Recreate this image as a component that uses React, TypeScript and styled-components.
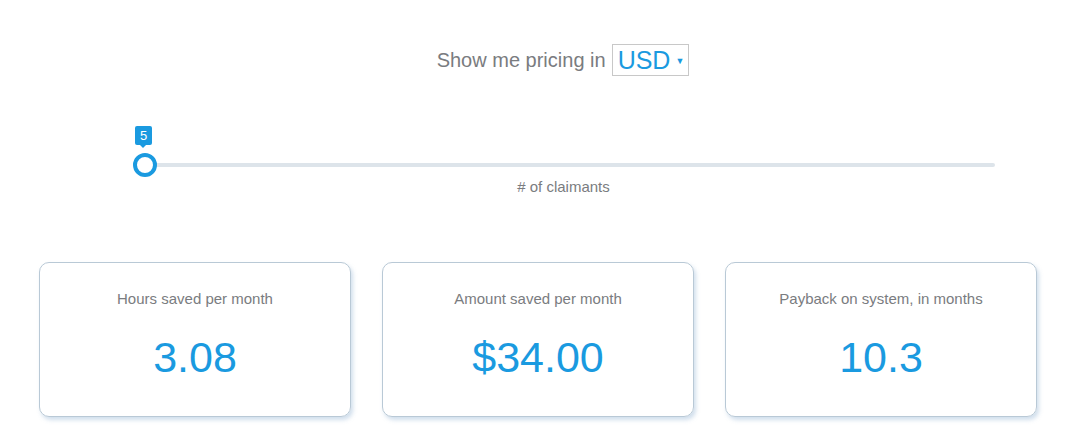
import React from "react"
import styled, { createGlobalStyle } from "styled-components"

const blue = "#1a9ae0"
const gray = "#7a7c80"

const GlobalStyle = createGlobalStyle`
    body {
        margin: 0;
        background: #fff;
        font-family: "Liberation Sans", Arial, sans-serif;
    }
`

const Page = styled.div`
    width: 1082px;
    height: 441px;
    overflow: hidden;
`

const Top = styled.div`
    margin-left: 44px;
    padding-top: 44px;
`

const CurrencyRow = styled.div`
    display: flex;
    justify-content: center;
    align-items: center;
    gap: 6px;
    font-size: 20px;
    color: ${gray};
`

const CurrencySelect = styled.div`
    display: flex;
    align-items: center;
    gap: 5px;
    height: 30px;
    padding: 0 4px 0 5px;
    border: 1px solid #c8c8c8;
    color: ${blue};
    font-size: 25px;
`

const Caret = styled.span`
    font-size: 9px;
    margin-top: 2px;
`

const SliderWrap = styled.div`
    padding: 87px 87px 0 100px;
`

const Track = styled.div`
    position: relative;
    height: 4px;
    background: #dde4ea;
    border-radius: 2px;
`

const Thumb = styled.div`
    position: absolute;
    left: -11px;
    top: -10px;
    width: 16px;
    height: 16px;
    border: 4px solid ${blue};
    border-radius: 50%;
    background: #fff;
`

const Bubble = styled.div`
    position: absolute;
    left: -9px;
    top: -37px;
    width: 17px;
    height: 19px;
    background: ${blue};
    color: #fff;
    font-size: 13px;
    line-height: 19px;
    text-align: center;
    border-radius: 2px;

    &::after {
        content: "";
        position: absolute;
        left: 5px;
        bottom: -3px;
        border-left: 3px solid transparent;
        border-right: 3px solid transparent;
        border-top: 3px solid ${blue};
    }
`

const SliderLabel = styled.div`
    text-align: center;
    color: ${gray};
    font-size: 15px;
    margin-top: 11px;
    padding-right: 12px;
`

const Cards = styled.div`
    display: flex;
    gap: 31px;
    padding: 0 45px 0 39px;
    margin-top: 67px;
`

const Card = styled.div`
    flex: 0 0 312px;
    height: 155px;
    box-sizing: border-box;
    border: 1px solid #b9c9d6;
    border-radius: 10px;
    box-shadow: 2px 3px 4px rgba(120, 160, 200, 0.35);
    display: flex;
    flex-direction: column;
    align-items: center;
`

const CardLabel = styled.div`
    margin-top: 27px;
    font-size: 15px;
    color: ${gray};
`

const CardValue = styled.div`
    margin-top: 26px;
    font-size: 43px;
    color: ${blue};
`

const stats = [
    { label: "Hours saved per month", value: "3.08" },
    { label: "Amount saved per month", value: "$34.00" },
    { label: "Payback on system, in months", value: "10.3" },
]

export default function App() {
    return (
        <Page>
            <GlobalStyle />
            <Top>
                <CurrencyRow>
                    Show me pricing in
                    <CurrencySelect>
                        USD <Caret>▼</Caret>
                    </CurrencySelect>
                </CurrencyRow>
                <SliderWrap>
                    <Track>
                        <Bubble>5</Bubble>
                        <Thumb />
                    </Track>
                    <SliderLabel># of claimants</SliderLabel>
                </SliderWrap>
            </Top>
            <Cards>
                {stats.map(s => (
                    <Card key={s.label}>
                        <CardLabel>{s.label}</CardLabel>
                        <CardValue>{s.value}</CardValue>
                    </Card>
                ))}
            </Cards>
        </Page>
    )
}
